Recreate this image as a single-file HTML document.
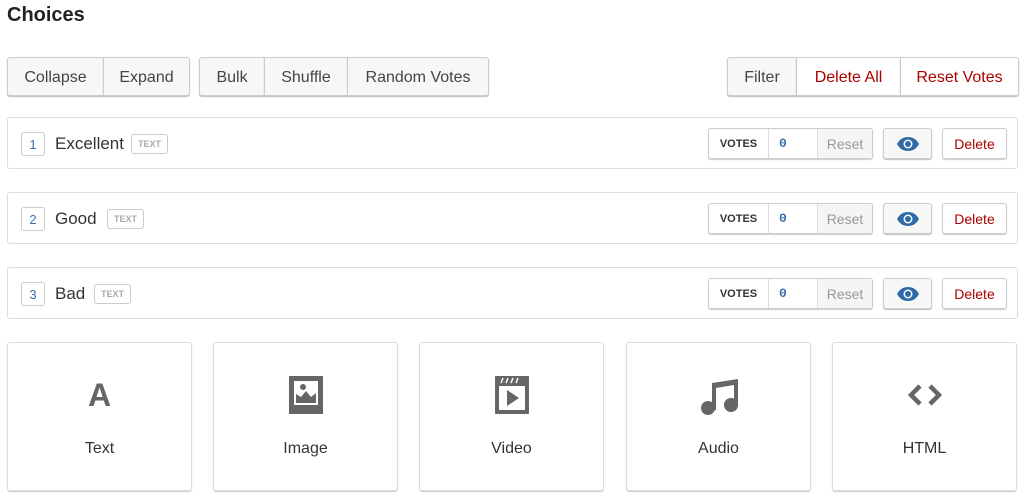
<!DOCTYPE html>
<html><head><style>
*{box-sizing:border-box;margin:0;padding:0}
body{width:1024px;height:501px;background:#fff;font-family:"Liberation Sans",sans-serif;color:#333;position:relative;overflow:hidden}
.a{position:absolute}
.btn{position:absolute;top:57px;height:39px;border:1px solid #ccc;background:#f7f7f7;box-shadow:0 1px 1px #bbb;font-size:16px;color:#444;display:flex;align-items:center;justify-content:center;padding-top:2px}
.red{color:#a00;background:#fff}
.row{position:absolute;left:7px;width:1011px;height:52px;border:1px solid #ddd;border-radius:3px;background:#fff}
.num{position:absolute;left:13px;top:14px;width:24px;height:24px;border:1px solid #ccc;border-radius:3px;color:#3a6fb0;font-size:13px;display:flex;align-items:center;justify-content:center}
.lbl{position:absolute;left:47px;top:16px;font-size:17px;color:#333}
.tag{position:absolute;top:16px;height:20px;border:1px solid #ccc;border-radius:3px;color:#aaa;font-size:9px;font-weight:bold;display:flex;align-items:center;justify-content:center}
.votes{position:absolute;left:700px;top:10px;width:165px;height:31px;border:1px solid #ccc;border-radius:3px;display:flex;font-size:11px;box-shadow:0 1px 1px #ccc}
.votes div{display:flex;align-items:center;justify-content:center}
.eye{position:absolute;left:875px;top:10px;width:49px;height:31px;border:1px solid #ccc;border-radius:3px;background:#f7f7f7;box-shadow:0 1px 1px #bbb;display:flex;align-items:center;justify-content:center}
.del{position:absolute;left:934px;top:10px;width:65px;height:31px;border:1px solid #ccc;border-radius:3px;color:#a00;font-size:14px;display:flex;align-items:center;justify-content:center;box-shadow:0 1px 1px #ccc}
.card{position:absolute;top:342px;width:185px;height:149px;border:1px solid #ddd;border-radius:3px;box-shadow:0 1px 1px #ccc}
.card .ic{position:absolute;left:0;right:0;top:32px;height:40px;display:flex;justify-content:center;align-items:center}
.card .t{position:absolute;left:0;right:0;top:97px;text-align:center;font-size:16px;color:#333}
</style></head><body>
<div class="a" style="left:7px;top:4px;font-size:20px;font-weight:bold;color:#222">Choices</div>

<div class="btn" style="left:7px;width:97px;border-radius:3px 0 0 3px">Collapse</div>
<div class="btn" style="left:103px;width:87px;border-radius:0 3px 3px 0">Expand</div>
<div class="btn" style="left:199px;width:66px;border-radius:3px 0 0 3px">Bulk</div>
<div class="btn" style="left:264px;width:84px">Shuffle</div>
<div class="btn" style="left:347px;width:142px;border-radius:0 3px 3px 0">Random Votes</div>
<div class="btn" style="left:727px;width:70px;border-radius:3px 0 0 3px">Filter</div>
<div class="btn red" style="left:796px;width:105px">Delete All</div>
<div class="btn red" style="left:900px;width:119px;border-radius:0 3px 3px 0">Reset Votes</div>

<div class="row" style="top:117px"><div class="num">1</div><div class="lbl">Excellent</div><div class="tag" style="left:123px;width:37px">TEXT</div>
<div class="votes"><div style="width:60px;font-weight:bold;color:#333;border-right:1px solid #ddd">VOTES</div><div style="width:48px;color:#3a6fb0;font-family:'Liberation Mono',monospace;font-size:13px;font-weight:bold;justify-content:flex-start;padding-left:10px">0</div><div style="flex:1;background:#f5f5f5;color:#999;font-size:14px;border-left:1px solid #ddd">Reset</div></div>
<div class="eye"><svg width="24" height="16" viewBox="0 0 24 16"><path d="M1 8C4 2.5 8 1 12 1s8 1.5 11 7c-3 5.5-7 7-11 7S4 13.5 1 8z" fill="#2f6aa8"/><circle cx="12" cy="8" r="4.5" fill="#fff"/><circle cx="12" cy="8" r="3" fill="#2f6aa8"/></svg></div>
<div class="del">Delete</div></div>

<div class="row" style="top:192px"><div class="num">2</div><div class="lbl">Good</div><div class="tag" style="left:99px;width:37px">TEXT</div>
<div class="votes"><div style="width:60px;font-weight:bold;color:#333;border-right:1px solid #ddd">VOTES</div><div style="width:48px;color:#3a6fb0;font-family:'Liberation Mono',monospace;font-size:13px;font-weight:bold;justify-content:flex-start;padding-left:10px">0</div><div style="flex:1;background:#f5f5f5;color:#999;font-size:14px;border-left:1px solid #ddd">Reset</div></div>
<div class="eye"><svg width="24" height="16" viewBox="0 0 24 16"><path d="M1 8C4 2.5 8 1 12 1s8 1.5 11 7c-3 5.5-7 7-11 7S4 13.5 1 8z" fill="#2f6aa8"/><circle cx="12" cy="8" r="4.5" fill="#fff"/><circle cx="12" cy="8" r="3" fill="#2f6aa8"/></svg></div>
<div class="del">Delete</div></div>

<div class="row" style="top:267px"><div class="num">3</div><div class="lbl">Bad</div><div class="tag" style="left:86px;width:37px">TEXT</div>
<div class="votes"><div style="width:60px;font-weight:bold;color:#333;border-right:1px solid #ddd">VOTES</div><div style="width:48px;color:#3a6fb0;font-family:'Liberation Mono',monospace;font-size:13px;font-weight:bold;justify-content:flex-start;padding-left:10px">0</div><div style="flex:1;background:#f5f5f5;color:#999;font-size:14px;border-left:1px solid #ddd">Reset</div></div>
<div class="eye"><svg width="24" height="16" viewBox="0 0 24 16"><path d="M1 8C4 2.5 8 1 12 1s8 1.5 11 7c-3 5.5-7 7-11 7S4 13.5 1 8z" fill="#2f6aa8"/><circle cx="12" cy="8" r="4.5" fill="#fff"/><circle cx="12" cy="8" r="3" fill="#2f6aa8"/></svg></div>
<div class="del">Delete</div></div>

<div class="card" style="left:7px;border-color:#e8d6e8"><div class="ic"><span style="font-size:32px;color:#666;font-weight:bold">A</span></div><div class="t">Text</div></div>
<div class="card" style="left:213px"><div class="ic"><svg width="34" height="38" viewBox="0 0 34 38"><rect x="0" y="0" width="34" height="38" fill="#666"/><rect x="5" y="5" width="24" height="24" fill="#fff"/><path d="M7 27V18l5 3 5-6 5 6 5-4v10z" fill="#666"/><circle cx="14" cy="11" r="3" fill="#666"/></svg></div><div class="t">Image</div></div>
<div class="card" style="left:419px"><div class="ic"><svg width="34" height="38" viewBox="0 0 34 38"><rect x="0" y="0" width="34" height="38" fill="#666"/><rect x="4" y="10" width="26" height="24" fill="#fff"/><path d="M8 2l-2 5M13 2l-2 5M18 2l-2 5M23 2l-2 5" stroke="#fff" stroke-width="1.5"/><path d="M12 14v16l12-8z" fill="#666"/></svg></div><div class="t">Video</div></div>
<div class="card" style="left:626px"><div class="ic"><svg width="40" height="40" viewBox="0 0 40 40"><path d="M13 8l26-4v26h-4V10L17 13v22h-4z" fill="#666"/><circle cx="9" cy="33" r="7" fill="#666"/><circle cx="32" cy="30" r="7" fill="#666"/></svg></div><div class="t">Audio</div></div>
<div class="card" style="left:832px"><div class="ic"><svg width="34" height="24" viewBox="0 0 34 24"><path d="M12 3L3 12l9 9M22 3l9 9-9 9" stroke="#666" stroke-width="4.5" fill="none"/></svg></div><div class="t">HTML</div></div>
</body></html>
